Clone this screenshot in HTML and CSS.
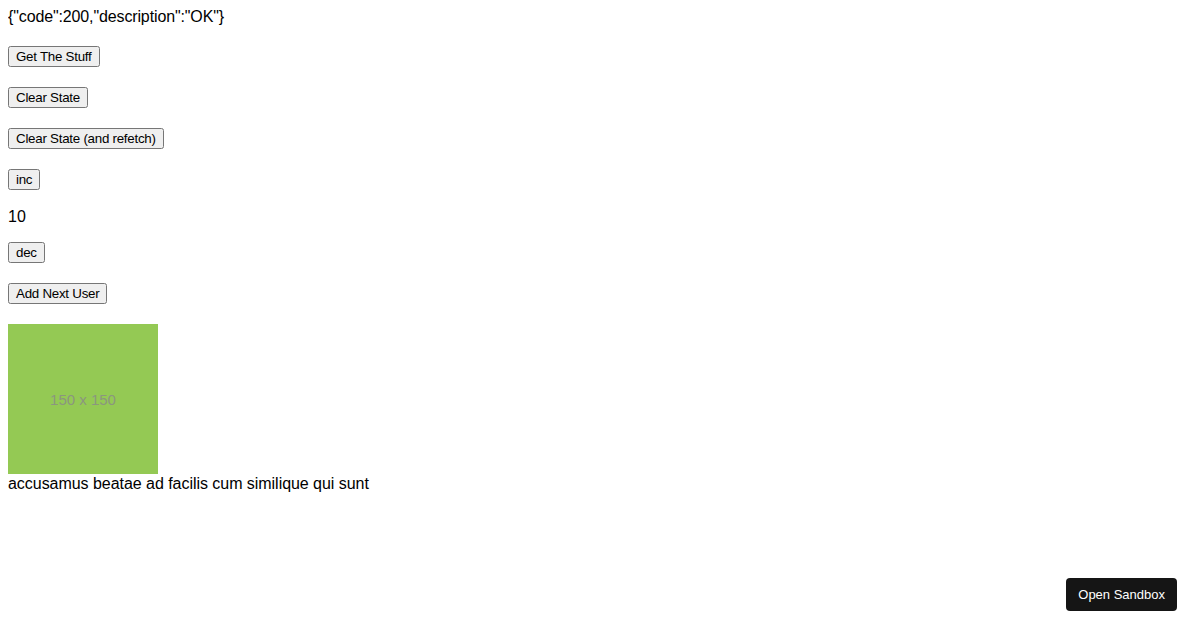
FILE: index.html
```html
<!DOCTYPE html>
<html>
<head>
<meta charset="utf-8">
<link rel="stylesheet" href="styles.css">
</head>
<body>
<div class="json">{"code":200,"description":"OK"}</div>
<p class="row"><button>Get The Stuff</button></p>
<p class="row"><button>Clear State</button></p>
<p class="row"><button>Clear State (and refetch)</button></p>
<p class="row"><button>inc</button></p>
<p class="count">10</p>
<p class="row"><button>dec</button></p>
<p class="row"><button>Add Next User</button></p>
<div class="user">
  <div class="avatar">150 x 150</div>
  <div class="name">accusamus beatae ad facilis cum similique qui sunt</div>
</div>
<a class="sandbox">Open Sandbox</a>
</body>
</html>
```
FILE: styles.css
```css
body {
  margin: 8px;
  font-family: "Liberation Sans", Arial, sans-serif;
  font-size: 16px;
  color: #000;
  background: #fff;
}
.json {
  letter-spacing: -0.13px;
}
.row {
  margin: 16px 0;
}
.row button {
  margin: 4px 0 0;
  font-family: "Liberation Sans", Arial, sans-serif;
  font-size: 13.333px;
  letter-spacing: -0.25px;
}
.count {
  margin: 18px 0 12px;
}
.count + .row {
  margin-top: 12px;
}
.user {
  margin-top: 20px;
}
.avatar {
  width: 150px;
  height: 150px;
  background: #94c954;
  color: #8b967f;
  font-size: 15px;
  display: flex;
  align-items: center;
  justify-content: center;
}
.name {
  padding-top: 1px;
  letter-spacing: -0.04px;
}
.sandbox {
  position: fixed;
  right: 23px;
  bottom: 19px;
  background: #151515;
  color: #fff;
  font-size: 13px;
  line-height: 15px;
  padding: 9px 12px;
  border-radius: 4px;
}
```
